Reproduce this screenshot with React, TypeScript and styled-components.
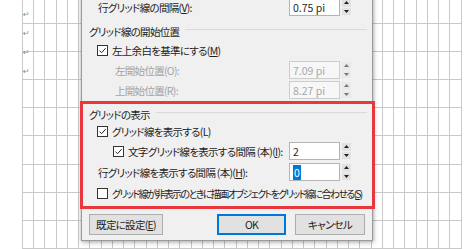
import React from 'react';
import styled, { createGlobalStyle } from 'styled-components';

const Global = createGlobalStyle`
  html, body { margin: 0; padding: 0; background: #fff; }
  body {
    width: 474px; height: 249px; overflow: hidden;
    font-family: "Noto Sans CJK JP", "Noto Sans", sans-serif;
  }
`;

const Page = styled.div`
  position: relative;
  width: 474px;
  height: 249px;
  overflow: hidden;
  background: #fff;
  display: flex;
`;

const LeftMargin = styled.div`
  width: 22px;
  flex: none;
`;

const GridArea = styled.div`
  width: 440px;
  flex: none;
  height: 100%;
  background-image:
    repeating-linear-gradient(to right, #c9c9c9 0 1px, transparent 1px 11.25px),
    repeating-linear-gradient(to bottom, transparent 0 23px, #c9c9c9 23px 24px, transparent 24px 28.1px);
  background-position: 0 0, 0 -28.1px;
  background-size: 100% 100%, 100% calc(100% + 28.1px);
  display: flex;
  flex-direction: column;
  padding-top: 5px;
  box-sizing: border-box;
`;

const Mark = styled.div`
  height: 19px;
  width: 8px;
  font-family: "DejaVu Sans", sans-serif;
  font-size: 8px;
  line-height: 19px;
  color: #8c8c8c;
  padding-left: 1px;
`;

const Dialog = styled.div`
  position: absolute;
  left: 81px;
  top: -4px;
  width: 292px;
  height: 245px;
  box-sizing: border-box;
  background: #f0f0f0;
  border: 1px solid #9b9b9b;
  box-shadow: 0 0 3px rgba(0, 0, 0, 0.25), 1px 2px 5px rgba(0, 0, 0, 0.2);
  padding: 1px 5px 0 7px;
  display: flex;
  flex-direction: column;
  font-size: 10.5px;
  color: #1e1e1e;
  letter-spacing: -0.7px;
  font-feature-settings: "palt";
`;

const Row = styled.div<{ $mt?: number; $indent?: number; $h?: number }>`
  display: flex;
  align-items: center;
  height: ${(p) => p.$h ?? 14}px;
  margin-top: ${(p) => p.$mt ?? 0}px;
  padding-left: ${(p) => p.$indent ?? 0}px;
  white-space: nowrap;
`;

const Label = styled.span<{ $disabled?: boolean; $tight?: boolean }>`
  flex: 1;
  color: ${(p) => (p.$disabled ? '#a3a3a3' : '#1e1e1e')};
  font-size: ${(p) => (p.$tight ? 10 : 10.5)}px;
  letter-spacing: ${(p) => (p.$tight ? -1.6 : -0.7)}px;
`;

const Key = styled.span`
  text-decoration: underline;
  text-underline-offset: 1px;
`;

const Heading = styled.div<{ $mt?: number }>`
  display: flex;
  align-items: center;
  height: 14px;
  margin-top: ${(p) => p.$mt ?? 0}px;
  gap: 6px;
  white-space: nowrap;
  &::after {
    content: '';
    flex: 1;
    height: 1px;
    margin-top: -4px;
    background: #d9d9d9;
  }
`;

const Box = styled.span`
  width: 11px;
  height: 11px;
  flex: none;
  box-sizing: border-box;
  border: 1px solid #333;
  background: #fff;
  margin-right: 4px;
  display: inline-flex;
  align-items: center;
  justify-content: center;
`;

const InputGroup = styled.div`
  display: flex;
  align-items: center;
  margin-right: 16px;
  letter-spacing: 0;
  font-feature-settings: normal;
`;

const Input = styled.div<{ $disabled?: boolean }>`
  width: 51px;
  height: 18px;
  box-sizing: border-box;
  border: 1px solid ${(p) => (p.$disabled ? '#cdcdcd' : '#b4b4b4')};
  background: ${(p) => (p.$disabled ? '#f7f7f7' : '#fff')};
  color: ${(p) => (p.$disabled ? '#a8a8a8' : '#2a2a2a')};
  padding-left: 3px;
  display: flex;
  align-items: center;
  font-size: 10.5px;
`;

const Selected = styled.span`
  background: #0078d7;
  color: #fff;
  padding: 0 1px;
`;

const Spin = styled.div`
  width: 9px;
  height: 16px;
  margin-left: 2px;
  display: flex;
  flex-direction: column;
  gap: 1px;
`;

const SpinBtn = styled.div<{ $disabled?: boolean }>`
  flex: 1;
  background: ${(p) => (p.$disabled ? '#e9e9e9' : '#e2e2e2')};
  display: flex;
  align-items: center;
  justify-content: center;
  color: ${(p) => (p.$disabled ? '#777' : '#222')};
`;

const Highlight = styled.div`
  margin: 2px -8px 0 -9px;
  border: 3px solid #e8383d;
  padding: 3px 5px 6px 6px;
  display: flex;
  flex-direction: column;
`;

const ButtonRow = styled.div`
  display: flex;
  align-items: center;
  justify-content: space-between;
  margin-top: 5px;
  padding-right: 2px;
`;

const ButtonGroup = styled.div`
  display: flex;
  gap: 9px;
`;

const Button = styled.div<{ $w: number; $default?: boolean }>`
  width: ${(p) => p.$w}px;
  height: 21px;
  box-sizing: border-box;
  border: ${(p) => (p.$default ? '2px solid #0078d7' : '1px solid #adadad')};
  background: #e1e1e1;
  display: flex;
  align-items: center;
  justify-content: center;
  white-space: nowrap;
`;

const Check = () => (
  <svg width="9" height="9" viewBox="0 0 9 9">
    <path d="M1.5 4.6 L3.6 6.7 L7.6 2.2" fill="none" stroke="#222" strokeWidth="1" />
  </svg>
);

const Arrow = ({ up }: { up?: boolean }) => (
  <svg width="5" height="3" viewBox="0 0 5 3">
    <path d={up ? 'M0 3 L2.5 0 L5 3 Z' : 'M0 0 L2.5 3 L5 0 Z'} fill="currentColor" />
  </svg>
);

const Field = ({ value, disabled }: { value: React.ReactNode; disabled?: boolean }) => (
  <InputGroup>
    <Input $disabled={disabled}>{value}</Input>
    <Spin>
      <SpinBtn $disabled={disabled}>
        <Arrow up />
      </SpinBtn>
      <SpinBtn $disabled={disabled}>
        <Arrow />
      </SpinBtn>
    </Spin>
  </InputGroup>
);

export default function App() {
  return (
    <>
      <Global />
      <Page>
        <LeftMargin />
        <GridArea>
          {[0, 1, 2, 3].map((i) => (
            <Mark key={i}>↵</Mark>
          ))}
        </GridArea>
        <Dialog>
          <Row $h={18} $indent={9}>
            <Label>
              行グリッド線の間隔(<Key>V</Key>):
            </Label>
            <Field value="0.75 pi" />
          </Row>
          <Heading $mt={8}>グリッド線の開始位置</Heading>
          <Row $mt={5} $indent={8}>
            <Box>
              <Check />
            </Box>
            <Label>
              左上余白を基準にする(<Key>M</Key>)
            </Label>
          </Row>
          <Row $h={18} $mt={4} $indent={26}>
            <Label $disabled>左開始位置(O):</Label>
            <Field value="7.09 pi" disabled />
          </Row>
          <Row $h={18} $mt={2} $indent={26}>
            <Label $disabled>上開始位置(R):</Label>
            <Field value="8.27 pi" disabled />
          </Row>
          <Highlight>
            <Heading>グリッドの表示</Heading>
            <Row $mt={3} $indent={8}>
              <Box>
                <Check />
              </Box>
              <Label>グリッド線を表示する(L)</Label>
            </Row>
            <Row $h={18} $mt={4} $indent={24}>
              <Box>
                <Check />
              </Box>
              <Label>
                文字グリッド線を表示する間隔 (本)(<Key>I</Key>):
              </Label>
              <Field value="2" />
            </Row>
            <Row $h={18} $mt={3} $indent={9}>
              <Label>
                行グリッド線を表示する間隔 (本)(<Key>H</Key>):
              </Label>
              <Field value={<Selected>0</Selected>} />
            </Row>
            <Row $mt={5} $indent={8}>
              <Box />
              <Label $tight>
                グリッド線が非表示のときに描画オブジェクトをグリッド線に合わせる(<Key>S</Key>)
              </Label>
            </Row>
          </Highlight>
          <ButtonRow>
            <Button $w={74}>
              既定に設定(<Key>E</Key>)
            </Button>
            <ButtonGroup>
              <Button $w={69} $default>
                OK
              </Button>
              <Button $w={70}>キャンセル</Button>
            </ButtonGroup>
          </ButtonRow>
        </Dialog>
      </Page>
    </>
  );
}
